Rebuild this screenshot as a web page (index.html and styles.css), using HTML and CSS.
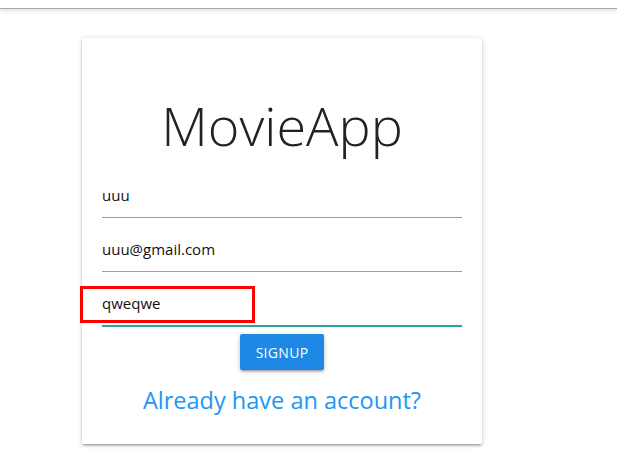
FILE: index.html
```html
<!DOCTYPE html>
<html lang="en">

<head>
    <meta charset="UTF-8" />
    <title>MovieApp</title>
    <link rel="stylesheet" href="styles.css">
</head>

<body>

    <!-- top nav edge -->
    <div class="topbar"></div>

    <div class="page">
        <div class="card">
            <h1 class="title">MovieApp</h1>

            <form class="signup-form">
                <div class="field">
                    <input type="text" value="uuu" />
                </div>
                <div class="field">
                    <input type="email" value="uuu@gmail.com" />
                </div>
                <div class="field focused">
                    <input type="text" value="qweqwe" />
                    <div class="highlight"></div>
                </div>

                <div class="btn-row">
                    <button type="button" class="btn">Signup</button>
                </div>
            </form>

            <a href="#" class="login-link">Already have an account?</a>
        </div>
    </div>

</body>

</html>
```

FILE: styles.css
```css
* {
    margin: 0;
    padding: 0;
    box-sizing: border-box;
    font-family: 'Open Sans', 'Noto Sans', sans-serif;
}

body {
    background-color: #fff;
    width: 617px;
    height: 454px;
    overflow: hidden;
}

.topbar {
    height: 9px;
    background-color: #fff;
    border-bottom: 1px solid #a8a8a8;
    box-shadow: 0 2px 4px rgba(0, 0, 0, 0.12);
}

.page {
    padding-top: 29px;
    padding-left: 82px;
}

.card {
    width: 400px;
    height: 406px;
    background-color: #fff;
    border-radius: 2px;
    padding: 0 20px;
    box-shadow: 0 2px 2px 0 rgba(0, 0, 0, 0.14), 0 3px 1px -2px rgba(0, 0, 0, 0.12), 0 1px 5px 0 rgba(0, 0, 0, 0.2);
    display: flex;
    flex-direction: column;
    align-items: center;
}

.title {
    margin-top: 57px;
    font-size: 54px;
    line-height: 61px;
    font-weight: 300;
    color: #222;
    text-align: center;
}

.signup-form {
    width: 360px;
    margin-top: 16px;
}

.field {
    position: relative;
    margin-bottom: 8px;
}

.field input {
    display: block;
    width: 100%;
    height: 46px;
    border: none;
    border-bottom: 1px solid #9e9e9e;
    outline: none;
    background: transparent;
    font-size: 15px;
    color: #111;
}

.focused input {
    border-bottom: 1px solid #26a69a;
    box-shadow: 0 1px 0 0 #26a69a;
}

/* annotation box over the password */
.highlight {
    position: absolute;
    left: -22px;
    top: 6px;
    width: 175px;
    height: 37px;
    border: 3px solid #f00;
}

.btn-row {
    display: flex;
    justify-content: center;
}

.btn {
    width: 84px;
    height: 36px;
    border: none;
    border-radius: 2px;
    background-color: #1e88e5;
    color: #fff;
    font-size: 14px;
    text-transform: uppercase;
    letter-spacing: 0.3px;
    box-shadow: 0 2px 2px 0 rgba(0, 0, 0, 0.14), 0 3px 1px -2px rgba(0, 0, 0, 0.12), 0 1px 5px 0 rgba(0, 0, 0, 0.2);
    cursor: pointer;
}

.login-link {
    margin-top: 14px;
    font-size: 23.5px;
    color: #2196f3;
    text-decoration: none;
}
```
